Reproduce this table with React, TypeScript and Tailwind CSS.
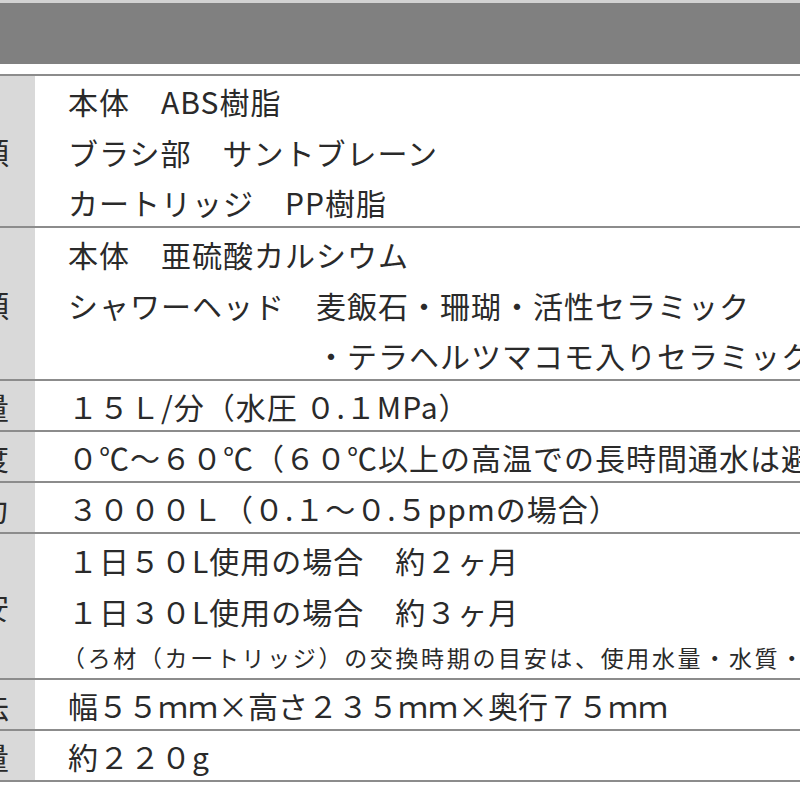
import React from "react";

const Line = ({ children, h = "h-[51px]" }: { children: React.ReactNode; h?: string }) => (
  <div className={`${h} flex items-center whitespace-nowrap`}>{children}</div>
);

const Row = ({ label, children }: { label: string; children: React.ReactNode }) => (
  <div className="flex border-b-2 border-[#8c8c8c]">
    <div className="w-[35px] shrink-0 bg-[#d9d9d9] overflow-hidden flex items-center justify-end pr-[25px]">
      <span className="whitespace-nowrap">{label}</span>
    </div>
    <div className="flex-1 min-w-0 pl-[33px] overflow-hidden">{children}</div>
  </div>
);

export default function App() {
  return (
    <div className="w-[800px] h-[800px] overflow-hidden bg-white text-[#2a2a2a] font-['Noto_Sans_CJK_JP',sans-serif] text-[30px] tracking-[1px] leading-none">
      <div className="h-[64px] border-t-[3px] border-[#d2d2d2] bg-[#808080]" />
      <div className="h-[10px]" />
      <div className="border-t-2 border-[#8c8c8c]">
        <Row label="材質の種類">
          <div className="-mt-[1px]">
            <Line>本体　ABS樹脂</Line>
            <Line>ブラシ部　サントブレーン</Line>
            <Line h="h-[49px]">カートリッジ　PP樹脂</Line>
          </div>
        </Row>
        <Row label="ろ材の種類">
          <Line>本体　亜硫酸カルシウム</Line>
          <div className="flex">
            <div className="whitespace-nowrap h-[51px] flex items-center">シャワーヘッド　</div>
            <div>
              <Line>麦飯石・珊瑚・活性セラミック</Line>
              <Line h="h-[49px]">・テラヘルツマコモ入りセラミック</Line>
            </div>
          </div>
        </Row>
        <Row label="定格流量">
          <Line h="h-[49px]">１５Ｌ/分（水圧 ０.１MPa）</Line>
        </Row>
        <Row label="使用温度">
          <Line h="h-[49px]">０℃～６０℃（６０℃以上の高温での長時間通水は避けてください）</Line>
        </Row>
        <Row label="ろ過能力">
          <Line h="h-[49px]">３０００Ｌ（０.１～０.５ppmの場合）</Line>
        </Row>
        <Row label="交換の目安">
          <Line>１日５０L使用の場合　約２ヶ月</Line>
          <Line>１日３０L使用の場合　約３ヶ月</Line>
          <Line h="h-[42px]">
            <span className="text-[23px] tracking-[2.65px] -ml-[6px]">（ろ材（カートリッジ）の交換時期の目安は、使用水量・水質・水温により異なります）</span>
          </Line>
        </Row>
        <Row label="寸法">
          <Line h="h-[49px]">
            <span className="tracking-[0px]">幅５５ｍｍ×高さ２３５ｍｍ×奥行７５ｍｍ</span>
          </Line>
        </Row>
        <Row label="重量">
          <Line h="h-[49px]">約２２０g</Line>
        </Row>
      </div>
    </div>
  );
}
